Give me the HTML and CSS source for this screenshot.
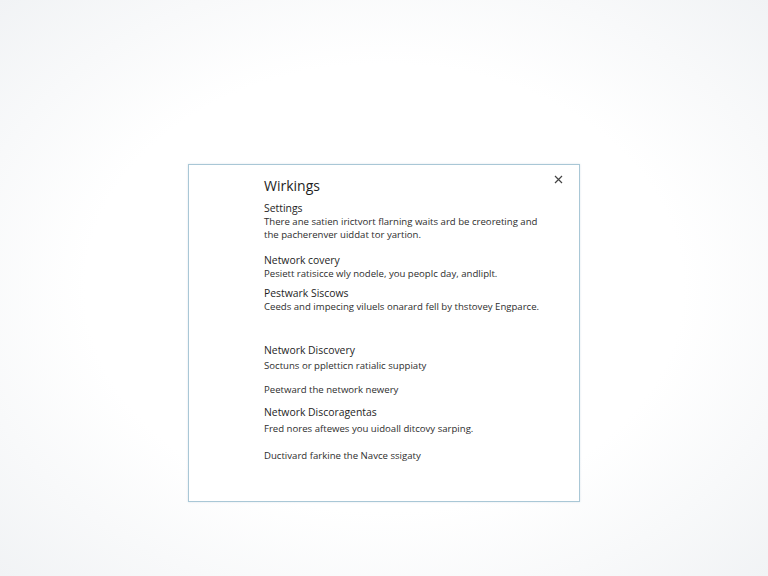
FILE: index.html
```html
<!DOCTYPE html>
<html>
<head>
<meta charset="utf-8">
<link rel="stylesheet" href="styles.css">
</head>
<body>
<div class="page">
  <div class="dialog">
    <button class="close" aria-label="Close">
      <svg width="9" height="9" viewBox="0 0 9 9"><path d="M1 1L8 8M8 1L1 8" stroke="#444" stroke-width="1.2" fill="none"/></svg>
    </button>
    <div class="content">
      <div class="title">Wirkings</div>
      <div class="heading g-settings">Settings</div>
      <div class="text">There ane satien irictvort flarning waits ard be creoreting and<br>the pacherenver uiddat tor yartion.</div>
      <div class="heading g-section">Network covery</div>
      <div class="text">Pesiett ratisicce wly nodele, you peoplc day, andliplt.</div>
      <div class="heading g-sub">Pestwark Siscows</div>
      <div class="text">Ceeds and impecing viluels onarard fell by thstovey Engparce.</div>
      <div class="heading g-group">Network Discovery</div>
      <div class="text g-tight">Soctuns or ppletticn ratialic suppiaty</div>
      <div class="text g-para">Peetward the network newery</div>
      <div class="heading g-next">Network Discoragentas</div>
      <div class="text g-tight2">Fred nores aftewes you uidoall ditcovy sarping.</div>
      <div class="text g-last">Ductivard farkine the Navce ssigaty</div>
    </div>
  </div>
</div>
</body>
</html>
```
FILE: styles.css
```css
html, body {
  margin: 0;
  padding: 0;
}
body {
  width: 768px;
  height: 576px;
  overflow: hidden;
  background: radial-gradient(ellipse at center, #ffffff 55%, #f1f3f5 100%);
  font-family: "Open Sans", "Noto Sans", sans-serif;
  color: #222;
}
.page {
  padding: 164px 0 0 188px;
}
.dialog {
  position: relative;
  box-sizing: border-box;
  width: 392px;
  height: 338px;
  background: #fff;
  border: 1px solid #a9c7d6;
  box-shadow: 0 0 2px rgba(120, 160, 180, 0.25);
}
.close {
  position: absolute;
  top: 7px;
  right: 14px;
  width: 14px;
  height: 14px;
  padding: 0;
  border: 0;
  background: transparent;
  display: flex;
  align-items: center;
  justify-content: center;
}
.content {
  padding: 11px 20px 0 75px;
  display: flex;
  flex-direction: column;
}
.title {
  font-size: 14px;
  line-height: 20px;
  color: #1e1e1e;
}
.heading {
  font-size: 10.4px;
  line-height: 14px;
  color: #1e1e1e;
}
.text {
  font-size: 9.6px;
  line-height: 13px;
  color: #2e2e2e;
}
.g-settings { margin-top: 4.5px; }
.g-section { margin-top: 12.5px; }
.g-sub { margin-top: 5.5px; }
.g-group { margin-top: 30px; }
.g-tight { margin-top: 2px; }
.g-para { margin-top: 11.5px; }
.g-next { margin-top: 9px; }
.g-tight2 { margin-top: 3px; }
.g-last { margin-top: 14px; }
```
